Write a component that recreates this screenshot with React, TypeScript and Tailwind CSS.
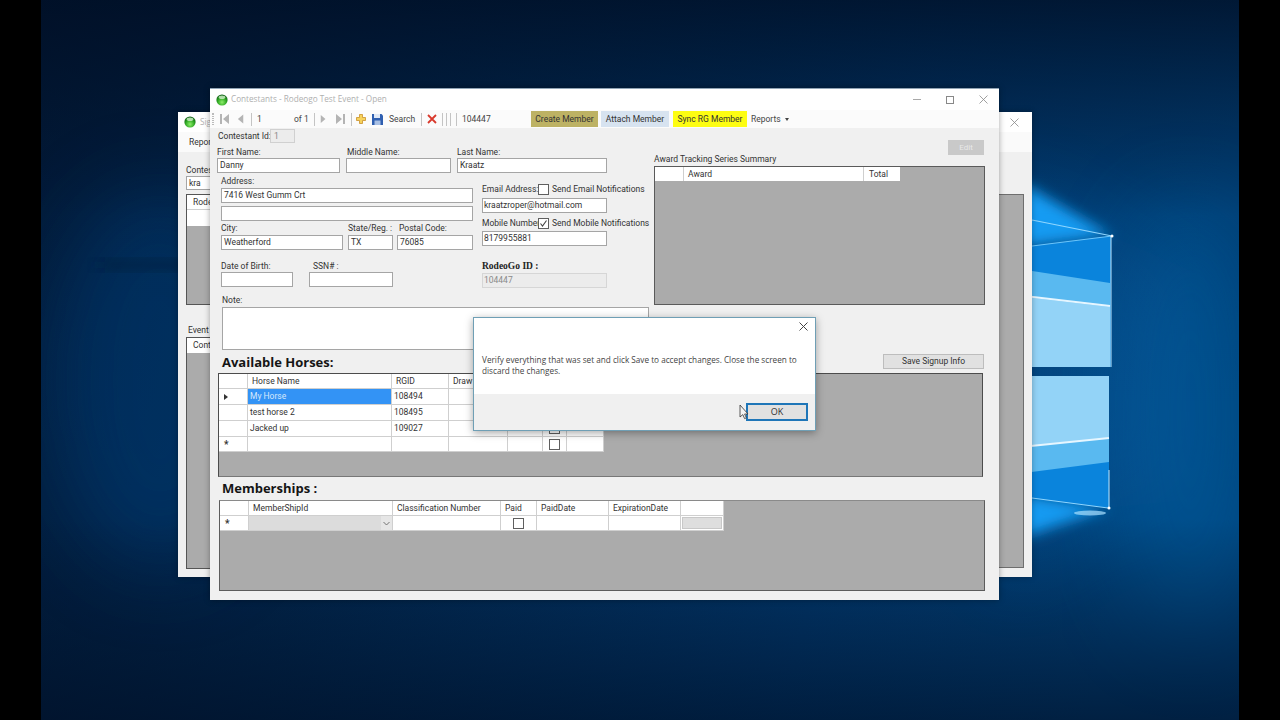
const inputBase = "h-[15px] shrink-0 border border-[#a5a5a5] bg-white px-[2px] text-[8.5px] leading-[13px] text-[#333]";

function Field({ className, value = "" }: { className: string; value?: string }) {
  return <div className={`${inputBase} ${className}`}>{value}</div>;
}

function Label({ children, className = "" }: { children: React.ReactNode; className?: string }) {
  return <div className={`h-[11px] whitespace-nowrap text-[8.5px] leading-[11px] text-[#333] ${className}`}>{children}</div>;
}

function Check({ checked = false }: { checked?: boolean }) {
  return (
    <div className="flex h-[11px] w-[11px] shrink-0 items-center justify-center border border-[#5f5f5f] bg-white">
      {checked && (
        <svg width="9" height="9" viewBox="0 0 9 9" fill="none" stroke="#444" strokeWidth="1.1">
          <path d="M1.5 4.5 L3.5 7 L7.5 1.5" />
        </svg>
      )}
    </div>
  );
}

function Orb() {
  return (
    <svg width="12" height="12" viewBox="0 0 12 12" className="shrink-0">
      <defs>
        <radialGradient id="orb" cx="50%" cy="70%" r="65%">
          <stop offset="0%" stopColor="#8ef06a" />
          <stop offset="60%" stopColor="#2fa823" />
          <stop offset="100%" stopColor="#0c5e12" />
        </radialGradient>
      </defs>
      <circle cx="6" cy="6" r="5.6" fill="url(#orb)" />
      <ellipse cx="6" cy="3.2" rx="3.4" ry="1.8" fill="#dff5d8" opacity="0.75" />
    </svg>
  );
}

function Sep({ className }: { className: string }) {
  return <div className={`h-[13px] w-px shrink-0 bg-[#c4c4c4] ${className}`} />;
}

function NavIcon({ d, className }: { d: string; className: string }) {
  return (
    <svg width="9" height="10" viewBox="0 0 9 10" className={`shrink-0 ${className}`}>
      <path d={d} fill="#b4b4b4" />
    </svg>
  );
}

function Toolbar() {
  return (
    <div className="flex h-[18px] shrink-0 items-center bg-[#fbfbfb] pl-[2px] text-[8.5px] text-[#444]">
      <div className="h-[12px] w-[2px] shrink-0 border-x border-dotted border-[#bbb]" />
      <NavIcon className="ml-[6px]" d="M0 0h2v10H0z M9 0v10L3 5z" />
      <NavIcon className="ml-[8px] w-[8px]" d="M7 0v10L1 5z" />
      <Sep className="ml-[6px]" />
      <div className="ml-[5px] w-[37px] shrink-0">1</div>
      <div className="w-[14px] shrink-0 whitespace-nowrap">of 1</div>
      <Sep className="ml-[6px]" />
      <NavIcon className="ml-[5px] w-[7px]" d="M1 0v10l6-5z" />
      <NavIcon className="ml-[9px]" d="M0 0v10l6-5z M7 0h2v10H7z" />
      <Sep className="ml-[6px]" />
      <svg width="10" height="10" viewBox="0 0 10 10" className="ml-[4px] shrink-0">
        <path d="M3.5 .5h3v3h3v3h-3v3h-3v-3h-3v-3h3z" fill="#f6d25c" stroke="#c9912a" strokeWidth=".8" />
      </svg>
      <svg width="11" height="11" viewBox="0 0 11 11" className="ml-[6px] shrink-0">
        <path d="M0 0h9.5L11 1.5V11H0z" fill="#2f5fb0" />
        <path d="M2 0h6v4H2z" fill="#dfe8f5" />
        <path d="M2.5 6.5h6V11h-6z" fill="#a9c0e4" />
      </svg>
      <div className="ml-[6px] w-[26px] shrink-0">Search</div>
      <Sep className="ml-[6px]" />
      <svg width="10" height="10" viewBox="0 0 10 10" className="ml-[5px] shrink-0" fill="none" stroke="#d8392c" strokeWidth="1.8">
        <path d="M1 1l8 8M9 1l-8 8" />
      </svg>
      <Sep className="ml-[5px]" />
      <Sep className="ml-[3px]" />
      <Sep className="ml-[3px]" />
      <Sep className="ml-[5px]" />
      <div className="ml-[5px] w-[26px] shrink-0">104447</div>
      <div className="ml-[43px] flex h-[16px] w-[67px] shrink-0 items-center justify-center bg-[#bdb264] text-[#333]">Create Member</div>
      <div className="ml-[3px] flex h-[16px] w-[68px] shrink-0 items-center justify-center bg-[#d7e3f0] text-[#333]">Attach Member</div>
      <div className="ml-[4px] flex h-[16px] w-[74px] shrink-0 items-center justify-center bg-[#fdfd12] text-[#333]">Sync RG Member</div>
      <div className="ml-[4px] flex shrink-0 items-center gap-[4px]">
        Reports
        <span className="h-0 w-0 border-x-[2.5px] border-t-[3px] border-x-transparent border-t-[#444]" />
      </div>
    </div>
  );
}

function TitleBar() {
  return (
    <div className="flex h-[21px] shrink-0 items-center bg-white pl-[6px] pr-[11px]">
      <Orb />
      <div className="ml-[3px] font-['Open_Sans',sans-serif] text-[8.2px] text-[#b0b0b0]">Contestants - Rodeogo Test Event - Open</div>
      <div className="ml-auto flex items-center gap-[25px]">
        <div className="h-px w-[8px] bg-[#a8a8a8]" />
        <div className="h-[8px] w-[8px] border border-[#888]" />
        <svg width="9" height="9" viewBox="0 0 9 9" stroke="#888" strokeWidth=".8">
          <path d="M.5.5l8 8M8.5.5l-8 8" />
        </svg>
      </div>
    </div>
  );
}

function Cell({ children, className = "" }: { children?: React.ReactNode; className?: string }) {
  return (
    <div className={`flex items-center overflow-hidden whitespace-nowrap border-b border-r border-[#cfcfcf] text-[8.5px] text-[#333] ${className}`}>
      {children}
    </div>
  );
}

function HorsesGrid() {
  const rows = [
    { marker: "arrow", name: "My Horse", id: "108494" },
    { marker: "", name: "test horse 2", id: "108495" },
    { marker: "", name: "Jacked up", id: "109027" },
    { marker: "star", name: "", id: "" },
  ];
  return (
    <div className="ml-[8px] h-[104px] w-[765px] shrink-0 border border-[#4c4c4c] border-b-[#777] bg-[#ababab]">
      <div className="grid w-[385px] grid-cols-[29px_144px_57px_59px_35px_24px_37px] grid-rows-[15px_16px_16px_16px_15px] bg-white">
        <Cell />
        <Cell className="pl-[4px]">Horse Name</Cell>
        <Cell className="pl-[4px]">RGID</Cell>
        <Cell className="pl-[4px]">Draw</Cell>
        <Cell />
        <Cell />
        <Cell />
        {rows.map((r) => (
          <div key={r.name} className="contents">
            <Cell className="pl-[5px]">
              {r.marker === "arrow" && <span className="h-0 w-0 border-y-[3.5px] border-l-[4px] border-y-transparent border-l-[#333]" />}
              {r.marker === "star" && <span className="text-[10px] font-bold">*</span>}
            </Cell>
            <Cell className={r.marker === "arrow" ? "bg-[#3393f5] pl-[2px] text-[#d5e8fb]" : "pl-[2px]"}>{r.name}</Cell>
            <Cell className="pl-[2px]">{r.id}</Cell>
            <Cell />
            <Cell />
            <Cell className="justify-center">
              <Check />
            </Cell>
            <Cell />
          </div>
        ))}
      </div>
    </div>
  );
}

function MembershipsGrid() {
  return (
    <div className="ml-[9px] h-[91px] w-[766px] shrink-0 border border-[#5c5c5c] border-t-[#8a8a8a] bg-[#ababab]">
      <div className="grid w-[504px] grid-cols-[29px_144px_108px_36px_72px_72px_43px] grid-rows-[15px_15px] bg-white">
        <Cell />
        <Cell className="pl-[4px]">MemberShipId</Cell>
        <Cell className="pl-[4px]">Classification Number</Cell>
        <Cell className="pl-[4px]">Paid</Cell>
        <Cell className="pl-[4px]">PaidDate</Cell>
        <Cell className="pl-[4px]">ExpirationDate</Cell>
        <Cell />
        <Cell className="pl-[5px]">
          <span className="text-[10px] font-bold">*</span>
        </Cell>
        <Cell className="justify-end bg-[#dcdcdc]">
          <div className="flex h-full w-[11px] items-center justify-center bg-[#e6e6e6]">
            <svg width="7" height="5" viewBox="0 0 7 5" fill="none" stroke="#666" strokeWidth=".9">
              <path d="M.5 1l3 3 3-3" />
            </svg>
          </div>
        </Cell>
        <Cell />
        <Cell className="justify-center">
          <Check />
        </Cell>
        <Cell />
        <Cell />
        <Cell className="p-px">
          <div className="h-full w-full border border-[#c8c8c8] bg-[#dedede]" />
        </Cell>
      </div>
    </div>
  );
}

function AwardPanel() {
  return (
    <div className="flex w-[331px] shrink-0 flex-col">
      <div className="mr-px mt-[12px] flex h-[15px] w-[36px] items-center justify-center self-end bg-[#c9c9c9] text-[8px] text-[#e8e8e8]">Edit</div>
      <Label className="-mt-px">Award Tracking Series Summary</Label>
      <div className="mt-px h-[139px] border border-[#5a5a5a] bg-[#ababab]">
        <div className="grid h-[14px] w-[245px] grid-cols-[29px_180px_36px] bg-white text-[8.5px] text-[#333]">
          <div className="border-r border-[#cfcfcf]" />
          <div className="flex items-center border-r border-[#cfcfcf] pl-[4px]">Award</div>
          <div className="flex items-center pl-[5px]">Total</div>
        </div>
      </div>
    </div>
  );
}

function ContestantForm() {
  return (
    <div className="flex h-[222px] shrink-0 pl-[7px]">
      <div className="flex w-[437px] shrink-0 flex-col">
        <div className="ml-px mt-px flex h-[14px] items-center">
          <Label className="w-[52px]">Contestant Id:</Label>
          <div className="h-[14px] w-[25px] border border-[#d0d0d0] bg-[#ececec] px-[3px] text-[8.5px] leading-[12px] text-[#888]">1</div>
        </div>
        <div className="mt-[4px] flex">
          <div className="w-[129px]">
            <Label>First Name:</Label>
            <Field className="w-[123px]" value="Danny" />
          </div>
          <div className="w-[111px]">
            <Label className="pl-px">Middle Name:</Label>
            <Field className="w-[105px]" />
          </div>
          <div>
            <Label>Last Name:</Label>
            <Field className="w-[150px]" value="Kraatz" />
          </div>
        </div>
        <div className="mt-[3px] flex">
          <div className="ml-[4px] flex w-[252px] shrink-0 flex-col">
            <Label>Address:</Label>
            <Field className="mt-px w-[252px]" value="7416 West Gumm Crt" />
            <Field className="mt-[3px] w-[252px]" />
            <div className="mt-[2px] flex">
              <div className="w-[127px]">
                <Label>City:</Label>
                <Field className="mt-px h-[14px] w-[122px]" value="Weatherford" />
              </div>
              <div className="w-[49px]">
                <Label>State/Reg. :</Label>
                <Field className="mt-px h-[14px] w-[45px]" value="TX" />
              </div>
              <div>
                <Label className="pl-[2px]">Postal Code:</Label>
                <Field className="mt-px h-[14px] w-[76px]" value="76085" />
              </div>
            </div>
            <div className="mt-[11px] flex">
              <div className="w-[88px]">
                <Label>Date of Birth:</Label>
                <Field className="w-[72px]" />
              </div>
              <div>
                <Label className="pl-[4px]">SSN# :</Label>
                <Field className="w-[84px]" />
              </div>
            </div>
          </div>
          <div className="ml-[9px] flex w-[125px] shrink-0 flex-col">
            <div className="mt-[8px] flex h-[11px] items-center">
              <Label className="w-[56px]">Email Address:</Label>
              <Check />
              <Label className="ml-[3px]">Send Email Notifications</Label>
            </div>
            <Field className="mt-[3px] w-[125px] px-px" value="kraatzroper@hotmail.com" />
            <div className="mt-[5px] flex h-[11px] items-center">
              <Label className="w-[56px]">Mobile Number:</Label>
              <Check checked />
              <Label className="ml-[3px]">Send Mobile Notifications</Label>
            </div>
            <Field className="mt-[2px] h-[14px] w-[125px] px-px" value="8179955881" />
            <div className="mt-[15px] h-[11px] whitespace-nowrap font-['Liberation_Serif',serif] text-[9.5px] font-bold leading-[11px] text-[#222]">RodeoGo ID :</div>
            <div className="mt-px h-[15px] w-[125px] border border-[#d6d6d6] bg-[#ececec] px-px text-[8.5px] leading-[13px] text-[#8a8a8a]">104447</div>
          </div>
        </div>
        <Label className="ml-[5px] mt-[7px]">Note:</Label>
        <Field className="ml-[5px] mt-px h-[43px] w-[427px]" />
      </div>
      <AwardPanel />
    </div>
  );
}

function MainWindow() {
  return (
    <div className="absolute left-[210px] top-[88px] flex h-[512px] w-[789px] flex-col border-t border-[#8fa3b5] bg-[#f0f0f0] shadow-[0_0_6px_rgba(0,0,0,0.35)]">
      <TitleBar />
      <Toolbar />
      <ContestantForm />
      <div className="flex h-[23px] shrink-0 items-center justify-between pl-[12px] pr-[15px]">
        <div className="pt-px font-['Open_Sans',sans-serif] text-[13px] font-bold leading-none text-[#151515]">Available Horses:</div>
        <div className="flex h-[15px] w-[101px] items-center justify-center border border-[#bdbdbd] bg-[#e1e1e1] text-[8.5px] text-[#333]">Save Signup Info</div>
      </div>
      <HorsesGrid />
      <div className="flex h-[23px] shrink-0 items-center pl-[12px] font-['Open_Sans',sans-serif] text-[13px] font-bold leading-none text-[#151515]">Memberships :</div>
      <MembershipsGrid />
    </div>
  );
}

function BackWindow() {
  return (
    <div className="absolute left-[178px] top-[112px] flex h-[465px] w-[854px] flex-col bg-[#f0f0f0] shadow-[0_0_6px_rgba(0,0,0,0.3)]">
      <div className="flex h-[20px] shrink-0 items-center bg-white pl-[6px] pr-[13px]">
        <Orb />
        <div className="ml-[4px] font-['Open_Sans',sans-serif] text-[8.2px] text-[#b0b0b0]">Signup</div>
        <svg width="9" height="9" viewBox="0 0 9 9" stroke="#888" strokeWidth=".8" className="ml-auto">
          <path d="M.5.5l8 8M8.5.5l-8 8" />
        </svg>
      </div>
      <div className="flex h-[20px] shrink-0 items-center bg-[#fafafa] pl-[11px] text-[8.5px] text-[#333]">Reports</div>
      <div className="flex flex-1 pl-[8px] pr-[8px]">
        <div className="flex w-[300px] shrink-0 flex-col">
          <Label className="mt-[13px]">Contestant</Label>
          <div className="h-[14px] w-[120px] border border-[#a5a5a5] bg-white px-[2px] text-[8.5px] leading-[12px] text-[#333]">kra</div>
          <div className="mt-[4px] h-[111px] border border-[#555] bg-[#ababab]">
            <div className="flex h-[15px] items-center border-b border-[#cfcfcf] bg-white pl-[6px] text-[8.5px] text-[#333]">Rodeo</div>
            <div className="h-[16px] bg-white" />
          </div>
          <Label className="ml-[2px] mt-[20px]">Event</Label>
          <div className="mt-px h-[232px] border border-[#555] bg-[#ababab]">
            <div className="flex h-[15px] items-center bg-white pl-[6px] text-[8.5px] text-[#333]">Contestant</div>
          </div>
        </div>
        <div className="mb-[9px] ml-auto mt-[42px] w-[200px] border border-[#6e6e6e] bg-[#ababab]" />
      </div>
    </div>
  );
}

function Dialog() {
  return (
    <div className="absolute left-[473px] top-[317px] flex h-[114px] w-[343px] flex-col border border-[#6f9fb5] bg-white shadow-[0_2px_8px_rgba(0,0,0,0.35)]">
      <div className="flex h-[76px] shrink-0 flex-col">
        <svg width="9" height="9" viewBox="0 0 9 9" stroke="#444" strokeWidth="1" className="ml-auto mr-[7px] mt-[4px]">
          <path d="M.5.5l8 8M8.5.5l-8 8" />
        </svg>
        <div className="ml-[8px] mt-[23px] w-[320px] font-['Open_Sans',sans-serif] text-[8.2px] leading-[11px] text-[#444]">
          Verify everything that was set and click Save to accept changes. Close the screen to discard the changes.
        </div>
      </div>
      <div className="flex flex-1 items-start justify-end bg-[#f0f0f0] pr-[7px] pt-[9px]">
        <div className="flex h-[18px] w-[62px] items-center justify-center border-2 border-[#1f76b8] bg-[#e1e1e1] font-['Open_Sans',sans-serif] text-[9px] text-[#333]">OK</div>
      </div>
    </div>
  );
}

function Wallpaper() {
  return (
    <svg className="absolute left-[41px] top-0" width="1198" height="720" viewBox="41 0 1198 720">
      <defs>
        <linearGradient id="base" x1="0" y1="0" x2="1" y2="0.15">
          <stop offset="0" stopColor="#021a38" />
          <stop offset="0.3" stopColor="#02264c" />
          <stop offset="0.75" stopColor="#013a70" />
          <stop offset="1" stopColor="#02427a" />
        </linearGradient>
        <linearGradient id="vert" x1="0" y1="0" x2="0" y2="1">
          <stop offset="0" stopColor="#000e24" stopOpacity="0.8" />
          <stop offset="0.3" stopColor="#000e24" stopOpacity="0.05" />
          <stop offset="0.72" stopColor="#000e24" stopOpacity="0" />
          <stop offset="1" stopColor="#000e24" stopOpacity="0.65" />
        </linearGradient>
        <linearGradient id="rayTop" x1="0" y1="0" x2="1" y2="0">
          <stop offset="0" stopColor="#e0f4ff" stopOpacity="0.5" />
          <stop offset="1" stopColor="#ffffff" />
        </linearGradient>
        <filter id="soft" x="-30%" y="-30%" width="160%" height="160%">
          <feGaussianBlur stdDeviation="7" />
        </filter>
        <filter id="softer" x="-30%" y="-30%" width="160%" height="160%">
          <feGaussianBlur stdDeviation="40" />
        </filter>
      </defs>
      <rect x="41" y="0" width="1198" height="720" fill="url(#base)" />
      <ellipse cx="160" cy="380" rx="110" ry="190" fill="#03386e" opacity="0.65" filter="url(#softer)" />
      <ellipse cx="1190" cy="420" rx="80" ry="220" fill="#015898" opacity="0.6" filter="url(#softer)" />
      <rect x="41" y="0" width="1198" height="720" fill="url(#vert)" />
      <rect x="100" y="260" width="90" height="10" fill="#00132b" opacity="0.4" filter="url(#soft)" />
      <path d="M1000 170 L1112 236 L1000 250z" fill="#12a0f8" filter="url(#soft)" />
      <path d="M1000 490 L1108 508 L1000 545z" fill="#12a0f8" filter="url(#soft)" />
      <path d="M1000 170 L1112 236 L1190 270 L1190 500 L1108 508 L1000 590z" fill="#0773c4" opacity="0.18" filter="url(#softer)" />
      <path d="M1000 250 L1111 236 V367 H1000z" fill="#0a84dc" />
      <path d="M1000 266 L1110 283 V367 H1000z" fill="#59b9f0" />
      <path d="M1000 294 L1110 307 V367 H1000z" fill="#93d3f7" />
      <path d="M1000 293 L1110 306" stroke="#e6f6ff" strokeWidth="2" />
      <path d="M1000 376 H1109 V508 L1000 494z" fill="#0a84dc" />
      <path d="M1000 376 H1109 V462 L1000 476z" fill="#59b9f0" />
      <path d="M1000 376 H1109 V438 L1000 449z" fill="#93d3f7" />
      <path d="M1000 449 L1109 438" stroke="#e6f6ff" strokeWidth="2" />
      <path d="M1032 220 L1112 236" stroke="#8fd6ff" strokeWidth="1.2" fill="none" />
      <path d="M1032 246 L1112 236" stroke="#6cc6fb" strokeWidth="1" fill="none" />
      <path d="M1111 236 V367" stroke="#bfe8ff" strokeWidth="1" fill="none" />
      <path d="M1032 498 L1108 508" stroke="#8fd6ff" strokeWidth="1" fill="none" />
      <path d="M1109 470 V508" stroke="#bfe8ff" strokeWidth="1" fill="none" />
      <ellipse cx="1090" cy="513" rx="16" ry="2.5" fill="#a9e0ff" opacity="0.7" />
      <circle cx="1112" cy="236" r="1.5" fill="#ffffff" />
      <circle cx="1109" cy="508" r="1.5" fill="#ffffff" />
    </svg>
  );
}

export default function App() {
  return (
    <div className="relative h-[720px] w-[1280px] overflow-hidden bg-black font-['Roboto',sans-serif]">
      <Wallpaper />
      <BackWindow />
      <MainWindow />
      <Dialog />
      <svg className="absolute left-[739px] top-[404px]" width="10" height="16" viewBox="0 0 10 16">
        <path d="M1 1 V13 L3.8 10.6 L5.6 14.6 L7.4 13.8 L5.6 10 H9z" fill="#f4f4f4" stroke="#333" strokeWidth=".8" />
      </svg>
    </div>
  );
}
